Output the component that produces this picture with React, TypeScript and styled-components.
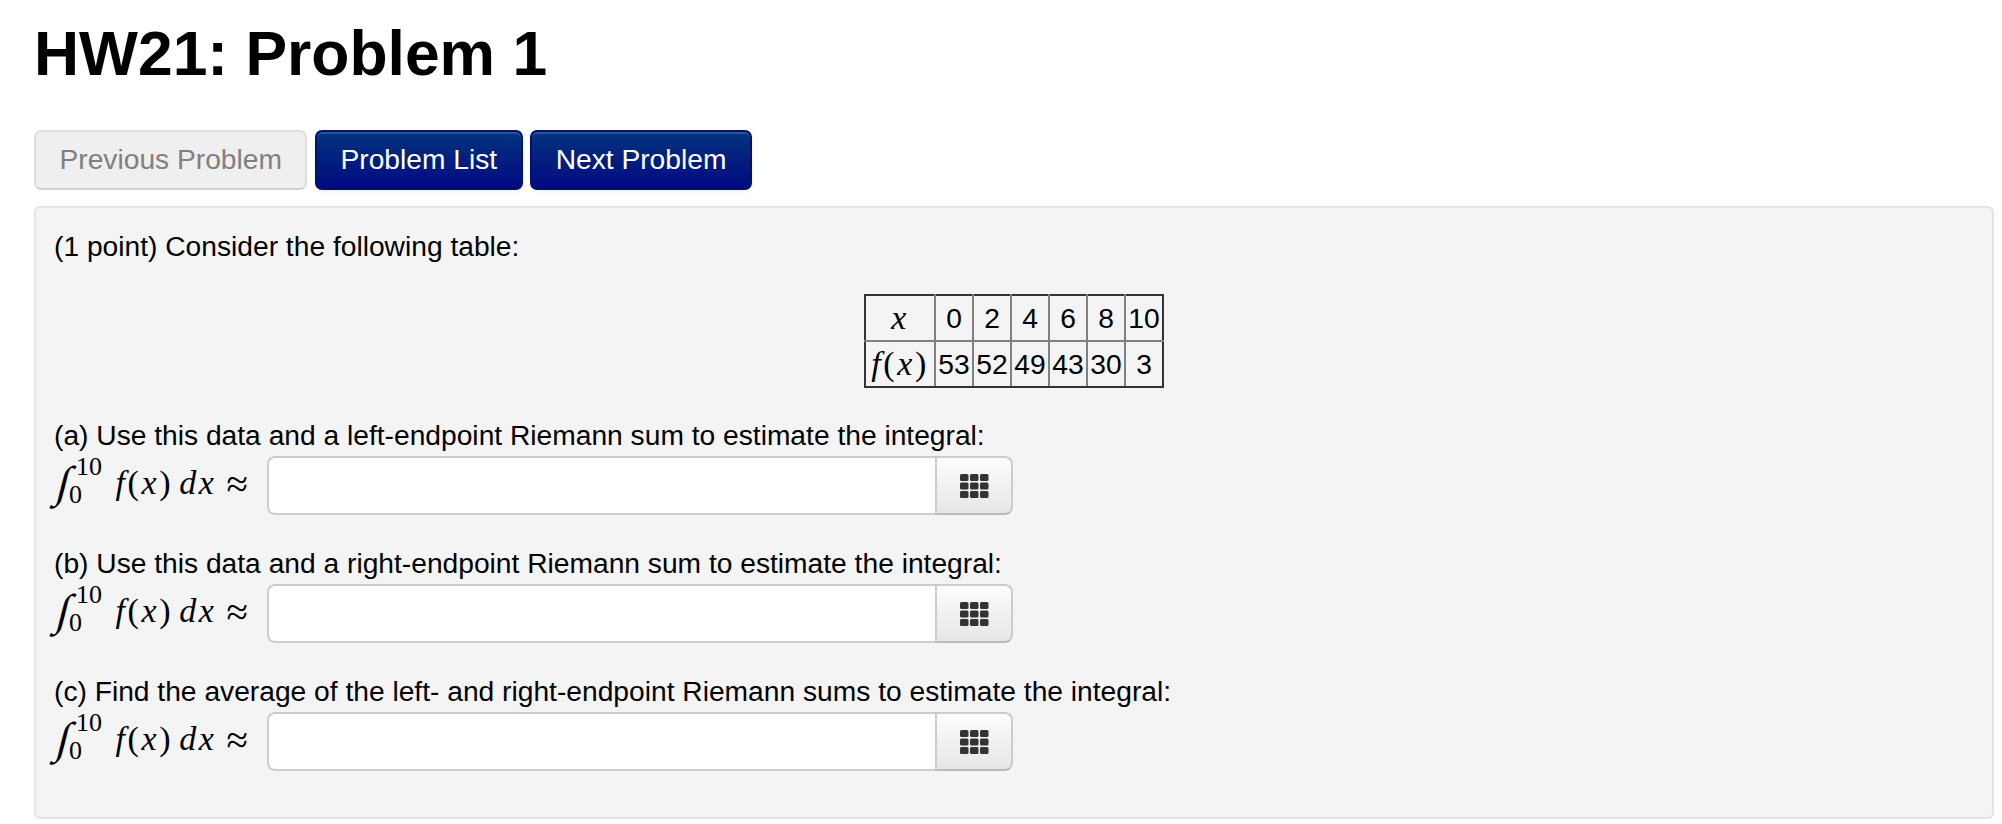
import React from "react";
import styled, { createGlobalStyle } from "styled-components";

const GlobalStyle = createGlobalStyle`
  html, body {
    margin: 0;
    padding: 0;
    background: #fff;
  }
  body {
    font-family: "Liberation Sans", Arial, sans-serif;
    font-size: 28.2px;
    color: #000;
  }
`;

const Page = styled.div`
  padding: 0 8px 5px 34px;
  display: flex;
  flex-direction: column;
  height: 824px;
  box-sizing: border-box;
`;

const Title = styled.h1`
  margin: 0;
  padding-top: 21px;
  height: 130px;
  box-sizing: border-box;
  font-size: 62.4px;
  line-height: 66px;
  font-weight: 700;
`;

const Toolbar = styled.div`
  display: flex;
  gap: 7.5px;
  height: 60px;
  margin-bottom: 16px;
`;

const NavButton = styled.a<{ $disabled?: boolean }>`
  display: flex;
  align-items: center;
  padding: 0 23.5px 2px;
  box-sizing: border-box;
  border-radius: 7px;
  font-size: 28.2px;
  color: ${(p) => (p.$disabled ? "#808080" : "#fff")};
  border: 2px solid ${(p) => (p.$disabled ? "#dedede" : "#00106e")};
  border-bottom-color: ${(p) => (p.$disabled ? "#d0d0d0" : "#00106e")};
  background: ${(p) =>
    p.$disabled ? "#efefef" : "linear-gradient(to bottom, #04337f, #000a80)"};
  box-shadow: ${(p) =>
    p.$disabled ? "none" : "inset 0 2px 0 rgba(255, 255, 255, 0.16), 0 2px 4px rgba(0, 0, 0, 0.06)"};
`;

const Panel = styled.div`
  flex: 1;
  background: #f4f4f4;
  border: 2px solid #e4e4e4;
  border-radius: 6px;
  padding: 22px 18px 0;
`;

const Line = styled.div`
  line-height: 32px;
`;

const TableWrap = styled.div`
  display: flex;
  justify-content: center;
  padding-top: 32px;
  margin-bottom: 31px;
`;

const DataTable = styled.table`
  border-collapse: collapse;
  text-align: center;
  td {
    border: 2px solid #808080;
    padding: 0;
    width: 36px;
    height: 44px;
    line-height: 32px;
  }
  td:first-child {
    width: 68px;
    border-left-color: #333;
  }
  td:last-child {
    border-right-color: #333;
  }
  tr:first-child td {
    border-top-color: #333;
  }
  tr:last-child td {
    border-bottom-color: #333;
  }
`;

const MathText = styled.span`
  font-family: "Liberation Serif", "Times New Roman", serif;
  font-style: italic;
  font-size: 34px;
  letter-spacing: 2.6px;
  white-space: nowrap;
`;

const Upright = styled.span`
  font-style: normal;
`;

const Differential = styled.span`
  margin-left: 6px;
`;

const Question = styled.div`
  margin-bottom: 32px;
`;

const AnswerRow = styled.div`
  display: flex;
  align-items: center;
  height: 59px;
  margin-top: 5px;
`;

const Formula = styled.div`
  width: 213px;
  display: flex;
  align-items: center;
  font-family: "Liberation Serif", "Times New Roman", serif;
  font-size: 34px;
  ${MathText} {
    margin-bottom: 5px;
  }
`;

const IntegralSign = styled.span`
  font-size: 44px;
  line-height: 44px;
  transform: skewX(-14deg);
  margin: 0 0 6px 4px;
`;

const Limits = styled.span`
  display: flex;
  flex-direction: column;
  font-size: 26px;
  line-height: 28px;
  margin: 0 13.5px 10px -1px;
`;

const UpperLimit = styled.span`
  margin-left: 7px;
`;

const Approx = styled.span`
  margin: 0 0 4px 10px;
  font-size: 39px;
  line-height: 1;
`;

const InputGroup = styled.div`
  display: flex;
  width: 746px;
  height: 59px;
`;

const AnswerInput = styled.input`
  flex: 1;
  min-width: 0;
  box-sizing: border-box;
  background: #fff;
  border: 2px solid #ccc;
  border-right: none;
  border-radius: 8px 0 0 8px;
  outline: none;
`;

const PaletteButton = styled.button`
  width: 78px;
  box-sizing: border-box;
  display: flex;
  align-items: center;
  justify-content: center;
  padding: 0;
  border: 2px solid #ccc;
  border-bottom-color: #b8b8b8;
  border-radius: 0 8px 8px 0;
  background: linear-gradient(to bottom, #fdfdfd, #e6e6e6);
`;

const GridIcon = () => (
  <svg width="29" height="24" viewBox="0 0 29 24">
    {[0, 8.5, 17].map((y) =>
      [0, 10, 20].map((x) => (
        <rect key={`${x}-${y}`} x={x} y={y} width="8.5" height="7" rx="1.5" fill="#333" />
      ))
    )}
  </svg>
);

const questions = [
  "(a) Use this data and a left-endpoint Riemann sum to estimate the integral:",
  "(b) Use this data and a right-endpoint Riemann sum to estimate the integral:",
  "(c) Find the average of the left- and right-endpoint Riemann sums to estimate the integral:",
];

const xs = ["0", "2", "4", "6", "8", "10"];
const fs = ["53", "52", "49", "43", "30", "3"];

export default function App() {
  return (
    <>
      <GlobalStyle />
      <Page>
        <Title>HW21: Problem 1</Title>
        <Toolbar>
          <NavButton $disabled>Previous Problem</NavButton>
          <NavButton>Problem List</NavButton>
          <NavButton>Next Problem</NavButton>
        </Toolbar>
        <Panel>
          <Line>(1 point) Consider the following table:</Line>
          <TableWrap>
            <DataTable>
              <tbody>
                <tr>
                  <td><MathText>x</MathText></td>
                  {xs.map((v) => <td key={v}>{v}</td>)}
                </tr>
                <tr>
                  <td><MathText>f<Upright>(</Upright>x<Upright>)</Upright></MathText></td>
                  {fs.map((v) => <td key={v}>{v}</td>)}
                </tr>
              </tbody>
            </DataTable>
          </TableWrap>
          {questions.map((q) => (
            <Question key={q}>
              <Line>{q}</Line>
              <AnswerRow>
                <Formula>
                  <IntegralSign>∫</IntegralSign>
                  <Limits>
                    <UpperLimit>10</UpperLimit>
                    <span>0</span>
                  </Limits>
                  <MathText>f<Upright>(</Upright>x<Upright>)</Upright><Differential>dx</Differential></MathText>
                  <Approx>≈</Approx>
                </Formula>
                <InputGroup>
                  <AnswerInput />
                  <PaletteButton><GridIcon /></PaletteButton>
                </InputGroup>
              </AnswerRow>
            </Question>
          ))}
        </Panel>
      </Page>
    </>
  );
}
